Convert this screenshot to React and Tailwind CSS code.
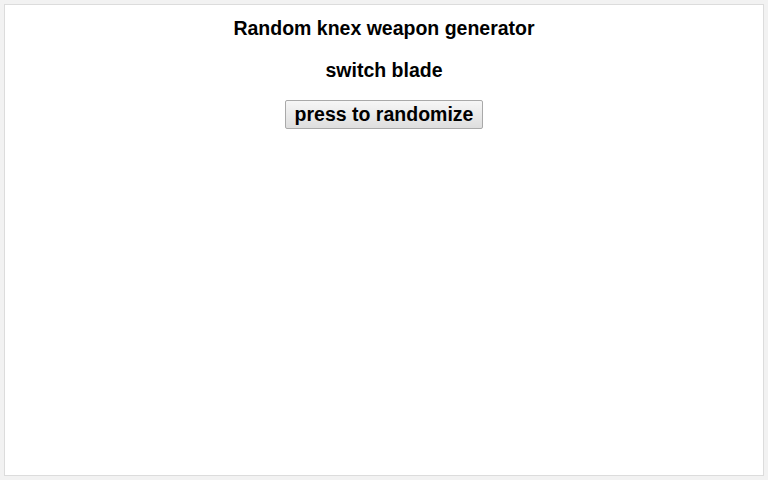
export default function App() {
  return (
    <div className="w-[768px] h-[480px] bg-[#f2f2f2] p-[4px]" style={{ fontFamily: '"Liberation Sans", Arial, sans-serif' }}>
      <div className="h-[472px] w-[760px] border border-[#dcdcdc] bg-white flex flex-col items-center text-black">
        <h1 className="mt-[11px] text-[19.5px] font-bold leading-[24px]">Random knex weapon generator</h1>
        <h2 className="mt-[18px] text-[19.5px] font-bold leading-[24px]">switch blade</h2>
        <button className="mt-[18px] h-[29px] px-[9px] pb-[2px] text-[19.5px] font-bold leading-[24px] border border-[#a9a9a9] rounded-[2px] bg-gradient-to-b from-[#f6f6f6] to-[#dedede]">
          press to randomize
        </button>
      </div>
    </div>
  );
}
